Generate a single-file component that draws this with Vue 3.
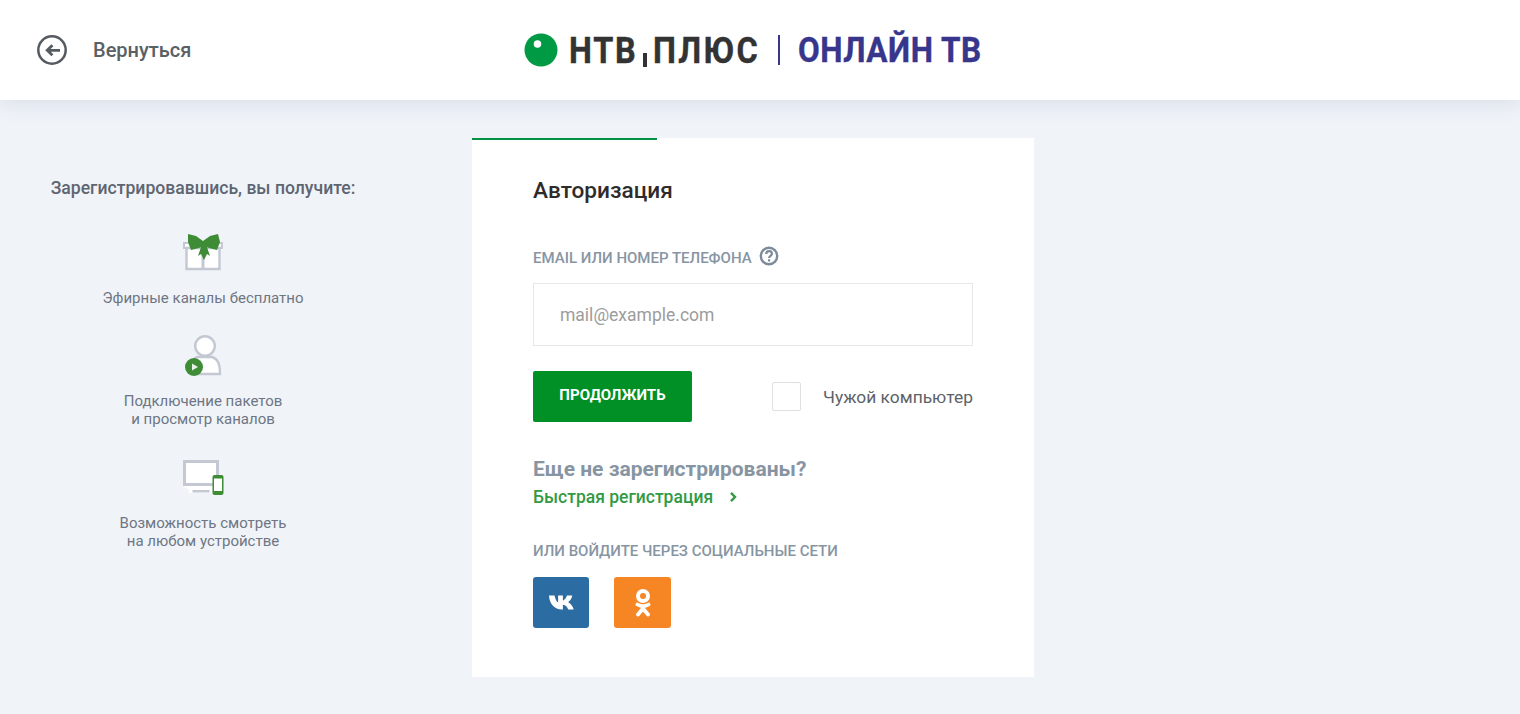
<template>
  <div class="page">
    <header class="header">
      <a class="back">
        <svg class="back-icon" width="32" height="32" viewBox="0 0 32 32">
          <circle cx="16" cy="16" r="13.700" fill="none" stroke="#555b60" stroke-width="2.500" />
          <path d="M24 16.300H11.500M16.400 11.200l-5.200 5.100 5.200 5" fill="none" stroke="#555b60" stroke-width="2.800" />
        </svg>
        <span>Вернуться</span>
      </a>
      <div class="logo">
        <svg class="logo-ball" width="34" height="34" viewBox="0 0 34 34">
          <circle cx="17" cy="17" r="16.500" fill="#009944" />
          <circle cx="13.500" cy="11" r="3.800" fill="#fff" />
        </svg>
        <span class="logo-ntv">НТВ</span>
        <i class="logo-tick"></i>
        <span class="logo-plus">ПЛЮС</span>
        <i class="logo-sep"></i>
        <span class="logo-online">ОНЛАЙН ТВ</span>
      </div>
    </header>

    <main class="main">
      <aside class="benefits">
        <h3 class="benefits-title">Зарегистрировавшись, вы получите:</h3>

        <div class="benefit gift">
          <svg width="40" height="38" viewBox="0 0 40 38">
            <path d="M1 9h38v5H1z" fill="#fff" stroke="#c3c8d2" stroke-width="2" />
            <path d="M3.500 14h33v21h-33z" fill="#fff" stroke="#c3c8d2" stroke-width="2.400" />
            <path d="M18.500 9h3v26h-3z" fill="#c3c8d2" />
            <path d="M5 0l8 2 7 5 7-5 8-2 2 8-3 8-8-2-2-1 3 9-3-2-3 6-3-6-3 2 3-9-2 1-8 2-3-8z" fill="#3f8c37" />
          </svg>
          <p>Эфирные каналы бесплатно</p>
        </div>

        <div class="benefit person">
          <svg width="40" height="42" viewBox="0 0 40 42">
            <path d="M14 22c-5 2-6 7-6 17h29c0-10-2-15-8-17z" fill="#fff" stroke="#c3c8d2" stroke-width="2.400" />
            <circle cx="22" cy="11" r="9.800" fill="#fff" stroke="#c3c8d2" stroke-width="2.400" />
            <circle cx="11" cy="32" r="9" fill="#3f8c37" />
            <path d="M9 28.500l6 3.500-6 3.500z" fill="#e9f1e8" />
          </svg>
          <p>Подключение пакетов<br />и просмотр каналов</p>
        </div>

        <div class="benefit device">
          <svg width="41" height="38" viewBox="0 0 41 38">
            <path d="M1.500 1.500h33v23h-33z" fill="#fff" stroke="#c3c8d2" stroke-width="3" />
            <path d="M0 26h36l-6 4v3H6v-3z" fill="#fff" />
            <path d="M9.500 30h17v2.500h-17z" fill="#c3c8d2" />
            <rect x="29.500" y="15" width="11" height="20" rx="2" fill="#3f8c37" />
            <path d="M31 18.500h8v12.500h-8z" fill="#fff" />
          </svg>
          <p>Возможность смотреть<br />на любом устройстве</p>
        </div>
      </aside>

      <section class="card">
        <h1 class="card-title">Авторизация</h1>

        <label class="field-label">
          EMAIL ИЛИ НОМЕР ТЕЛЕФОНА
          <svg width="20" height="20" viewBox="0 0 20 20">
            <circle cx="10" cy="10" r="8.200" fill="none" stroke="#7d8b99" stroke-width="2.400" />
            <path d="M7.200 8c0-1.800 1.200-2.800 2.900-2.800s2.800 1 2.800 2.500c0 2.200-2.800 2.200-2.800 4.300" fill="none" stroke="#7d8b99" stroke-width="2.200" />
            <rect x="9" y="13.300" width="2.200" height="2.200" fill="#7d8b99" />
          </svg>
        </label>
        <input class="field-input" type="text" placeholder="mail@example.com" />

        <div class="actions">
          <button class="submit">ПРОДОЛЖИТЬ</button>
          <label class="foreign">
            <span class="check"></span>
            <span>Чужой компьютер</span>
          </label>
        </div>

        <p class="no-account">Еще не зарегистрированы?</p>
        <a class="quick-reg">
          Быстрая регистрация
          <svg width="9" height="12" viewBox="0 0 9 12">
            <path d="M2 1.800l4 4.200-4 4.200" fill="none" stroke="#339a44" stroke-width="2.400" />
          </svg>
        </a>

        <p class="social-label">ИЛИ ВОЙДИТЕ ЧЕРЕЗ СОЦИАЛЬНЫЕ СЕТИ</p>
        <div class="social">
          <a class="social-btn vk">
            <svg width="27" height="15" viewBox="1 1 22.500 13.500">
              <path d="M1 1.500h5c.5 3 1.800 5.500 3.200 6.300V1.500h4.300v4.600c1.500-.7 3-2.500 3.700-4.600H22c-.6 3-2.300 5-3.700 6 1.800.9 3.800 2.700 5 6.500h-5c-.8-2.400-2.300-4-4.800-4.300v4.300h-1C6 14 1.500 9.500 1 1.500z" fill="#fff" />
            </svg>
          </a>
          <a class="social-btn ok">
            <svg width="16" height="28" viewBox="0 0 16 28">
              <circle cx="8" cy="7" r="5" fill="none" stroke="#fff" stroke-width="4" />
              <path d="M2.500 15.500c3.500 2.200 7.500 2.200 11 0M8 17.500v2M3 25.500l5-6 5 6" fill="none" stroke="#fff" stroke-width="3.800" stroke-linecap="round" />
            </svg>
          </a>
        </div>
      </section>
    </main>
  </div>
</template>

<script setup>
</script>

<style>
html,
body {
  margin: 0;
  background: #f0f3f8;
}
</style>

<style scoped>
.page {
  min-height: 714px;
  background: #f0f3f8;
  font-family: Roboto, "Liberation Sans", sans-serif;
  overflow: hidden;
}

.header {
  position: relative;
  height: 100px;
  background: #fff;
  box-shadow: 0 4px 20px rgba(60, 80, 120, 0.12);
  display: flex;
  align-items: center;
}

.back {
  display: flex;
  align-items: center;
  margin-left: 36px;
  font-size: 20px;
  font-weight: 500;
  color: #5a6064;
}

.back-icon {
  margin-right: 25px;
}

.logo {
  position: absolute;
  left: 524px;
  top: 33px;
  display: flex;
  align-items: center;
  font-weight: 700;
  font-size: 36px;
  line-height: 36px;
  height: 34px;
  white-space: nowrap;
}

.logo-ball {
  margin-right: 11px;
}

.logo-ntv,
.logo-plus,
.logo-online {
  display: inline-block;
  margin-top: 2px;
  transform: scaleX(0.9);
  transform-origin: left center;
  -webkit-text-stroke: 0.400px currentColor;
}

.logo-ntv,
.logo-plus {
  color: #333;
}

.logo-ntv {
  width: 74px;
  letter-spacing: 2px;
}

.logo-tick {
  width: 3.500px;
  height: 14px;
  background: #333;
  margin: 20px 6.500px 0 0;
}

.logo-plus {
  width: 107px;
  letter-spacing: 2.600px;
}

.logo-sep {
  width: 1.500px;
  height: 30px;
  background: #37368c;
  margin: 0 18px 0 18px;
}

.logo-online {
  color: #37368c;
  font-size: 35px;
  letter-spacing: 0.600px;
}

.main {
  display: flex;
  align-items: flex-start;
  padding-top: 38px;
}

.benefits {
  width: 406px;
  margin-right: 66px;
  text-align: center;
  color: #6b7280;
}

.benefits-title {
  margin: 39px 0 0;
  font-size: 17.600px;
  line-height: 22px;
  font-weight: 500;
  color: #5e6570;
}

.benefit svg {
  display: block;
  margin: 0 auto;
}

.benefit p {
  margin: 0;
  font-size: 15px;
  line-height: 18px;
  color: #6e7683;
}

.gift {
  margin-top: 35px;
}

.gift p {
  margin-top: 17px;
}

.person {
  margin-top: 28px;
}

.person p {
  margin-top: 15px;
}

.device {
  margin-top: 32px;
}

.device p {
  margin-top: 16px;
}

.card {
  width: 562px;
  height: 539px;
  box-sizing: border-box;
  background: #fff;
  padding: 0 61px;
  position: relative;
}

.card::before {
  content: "";
  position: absolute;
  left: 0;
  top: 0;
  width: 185px;
  height: 2px;
  background: #009144;
}

.card-title {
  margin: 0;
  padding-top: 39px;
  font-size: 22.600px;
  line-height: 28px;
  font-weight: 500;
  color: #2f2b2b;
}

.field-label {
  display: flex;
  align-items: center;
  gap: 7px;
  margin-top: 43px;
  font-size: 15px;
  line-height: 20px;
  font-weight: 500;
  color: #8795a3;
}

.field-label svg {
  margin-top: -4px;
}

.field-input {
  display: block;
  box-sizing: border-box;
  width: 440px;
  height: 63px;
  margin-top: 15px;
  padding: 0 26px;
  border: 1px solid #e6e8ec;
  outline: none;
  font: 400 17.500px Roboto, sans-serif;
}

.field-input::placeholder {
  color: #9c9c9c;
}

.actions {
  display: flex;
  align-items: center;
  justify-content: space-between;
  margin-top: 25px;
}

.submit {
  width: 159px;
  height: 51px;
  border: 0;
  border-radius: 2px;
  background: #009025;
  color: #fff;
  font: 700 15px Roboto, sans-serif;
  padding-bottom: 4px;
}

.foreign {
  display: flex;
  align-items: center;
  gap: 22px;
  font-size: 17.400px;
  color: #5d6268;
}

.check {
  width: 27px;
  height: 27px;
  border: 1px solid #e0e0e0;
  border-radius: 2px;
}

.no-account {
  margin: 35px 0 0;
  font-size: 21px;
  line-height: 24px;
  font-weight: 700;
  color: #8795a3;
}

.quick-reg {
  display: flex;
  align-items: center;
  gap: 16px;
  margin-top: 4px;
  font-size: 17.500px;
  line-height: 24px;
  font-weight: 500;
  color: #339a44;
}

.social-label {
  margin: 32px 0 0;
  font-size: 15px;
  line-height: 20px;
  font-weight: 500;
  color: #8795a3;
}

.social {
  display: flex;
  gap: 25px;
  margin-top: 16px;
}

.social-btn {
  height: 51px;
  border-radius: 3px;
  display: flex;
  align-items: center;
  justify-content: center;
}

.vk {
  width: 56px;
  background: #2b6ca3;
}

.ok {
  width: 57px;
  background: #f68523;
}
</style>
